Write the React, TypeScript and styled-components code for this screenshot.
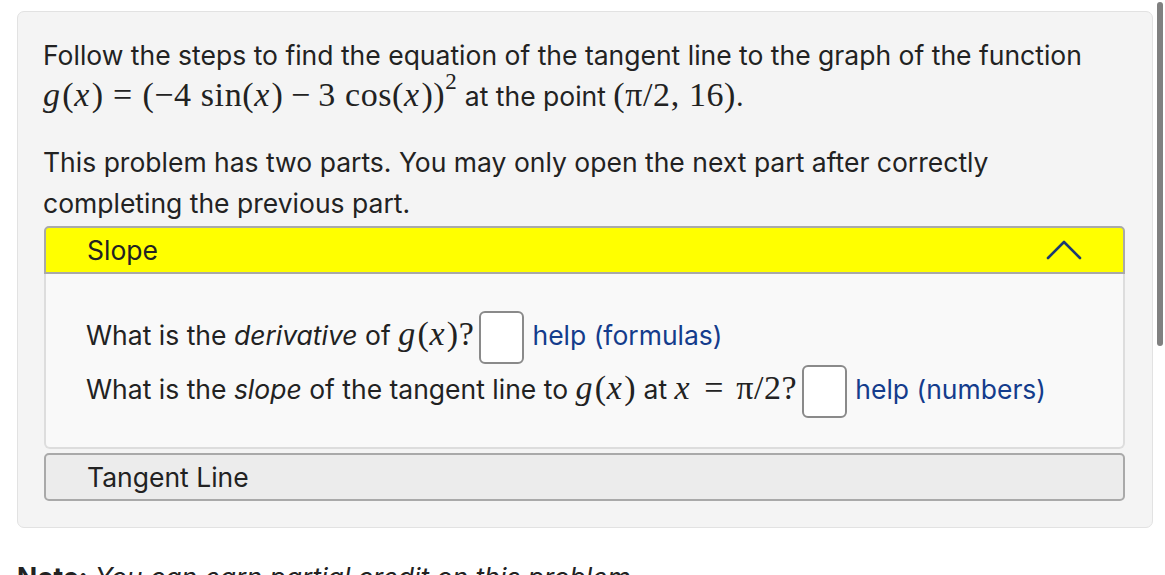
import styled, { createGlobalStyle } from "styled-components";

const GlobalStyle = createGlobalStyle`
  html, body {
    margin: 0;
    padding: 0;
    background: #ffffff;
    overflow: hidden;
  }
  body {
    font-family: Inter, "Liberation Sans", sans-serif;
    color: #222222;
  }
`;

const Page = styled.div`
  position: relative;
  width: 1165px;
  height: 575px;
  padding: 11px 0 0 17px;
  box-sizing: border-box;
  overflow: hidden;
`;

const ScrollThumb = styled.div`
  position: absolute;
  top: 2px;
  right: 2px;
  width: 6px;
  height: 344px;
  border-radius: 3px;
  background: #808080;
`;

const Card = styled.div`
  width: 1136px;
  height: 517px;
  box-sizing: border-box;
  padding: 23px 27px 0 25px;

  background: #f4f4f4;
  border: 1px solid #e2e2e2;
  border-radius: 7px;
`;

const Paragraph = styled.p<{ $gap: number }>`
  margin: 0 0 ${(p) => p.$gap}px;
  font-size: 26.5px;
  line-height: 41px;
`;

const Math = styled.span`
  font-family: "Liberation Serif", "DejaVu Serif", serif;
  font-size: 34px;
  letter-spacing: 0.6px;
  line-height: 0;
  white-space: nowrap;
`;

const V = styled.i`
  font-style: italic;
  padding-right: 0.05em;
`;

const Op = styled.span<{ $space: number }>`
  padding: 0 ${(p) => p.$space}em;
`;

const Sup = styled.sup`
  font-size: 23px;
  vertical-align: 17px;
  line-height: 0;
`;

const Accordion = styled.div`
  margin-left: 1px;
  display: flex;
  flex-direction: column;
  gap: 4px;
`;

const Section = styled.div`
  display: flex;
  flex-direction: column;
`;

const SectionHeader = styled.div<{ $open?: boolean }>`
  height: 48px;
  box-sizing: border-box;
  padding: 0 41px 0 41px;

  display: flex;
  align-items: center;
  justify-content: space-between;

  font-size: 26.5px;
  color: #222222;
  background: ${(p) => (p.$open ? "#ffff00" : "#ececec")};
  border: 2px solid #a9a9a9;
  border-radius: ${(p) => (p.$open ? "5px 5px 0 0" : "5px")};
`;

const SectionBody = styled.div`
  padding: 34px 40px 31px 40px;

  background: #f9f9f9;
  border: 2px solid #dddddd;
  border-top: none;
  border-radius: 0 0 6px 6px;
  font-size: 26.5px;
`;

const QuestionRow = styled.div`
  height: 54px;
  line-height: 54px;
  white-space: nowrap;
`;

const Em = styled.em`
  font-style: italic;
`;

const AnswerBox = styled.span`
  width: 45px;
  height: 53px;
  box-sizing: border-box;
  margin: 0 8px 0 5px;

  display: inline-block;
  vertical-align: middle;
  background: #ffffff;
  border: 2px solid #8a8a8a;
  border-radius: 6px;
`;

const HelpLink = styled.a`
  color: #143c8c;
  text-decoration: none;
`;

const Note = styled.p`
  margin: 29px 0 0 0;
  font-size: 26.5px;
  line-height: 41px;
`;

const Chevron = () => (
  <svg width="36" height="20" viewBox="0 0 36 20">
    <path
      d="M2 18 L18 2 L34 18"
      fill="none"
      stroke="#1c3a72"
      strokeWidth="2.6"
      strokeLinecap="round"
      strokeLinejoin="round"
    />
  </svg>
);

export default function App() {
  return (
    <Page>
      <GlobalStyle />
      <Card>
        <Paragraph $gap={25}>
          Follow the steps to find the equation of the tangent line to the
          graph of the function{" "}
          <Math>
            <V>g</V>(<V>x</V>)<Op $space={0.28}>=</Op>(−4 sin(<V>x</V>)
            <Op $space={0.22}>−</Op>3 cos(<V>x</V>))
            <Sup>2</Sup>
          </Math>{" "}
          at the point <Math>(π/2, 16)</Math>.
        </Paragraph>
        <Paragraph $gap={2}>
          This problem has two parts. You may only open the next part after
          correctly completing the previous part.
        </Paragraph>
        <Accordion>
          <Section>
            <SectionHeader $open>
              Slope
              <Chevron />
            </SectionHeader>
            <SectionBody>
              <QuestionRow>
                What is the <Em>derivative</Em> of{" "}
                <Math>
                  <V>g</V>(<V>x</V>)?
                </Math>
                <AnswerBox />
                <HelpLink>help (formulas)</HelpLink>
              </QuestionRow>
              <QuestionRow>
                What is the <Em>slope</Em> of the tangent line to{" "}
                <Math>
                  <V>g</V>(<V>x</V>)
                </Math>{" "}
                at{" "}
                <Math>
                  <V>x</V>
                  <Op $space={0.36}>=</Op>π/2?
                </Math>
                <AnswerBox />
                <HelpLink>help (numbers)</HelpLink>
              </QuestionRow>
            </SectionBody>
          </Section>
          <Section>
            <SectionHeader>Tangent Line</SectionHeader>
          </Section>
        </Accordion>
      </Card>
      <Note>
        <b>Note:</b> <Em>You can earn partial credit on this problem.</Em>
      </Note>
      <ScrollThumb />
    </Page>
  );
}
